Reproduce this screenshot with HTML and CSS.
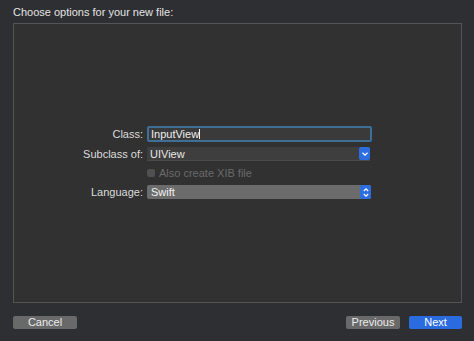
FILE: index.html
```html
<!DOCTYPE html>
<html lang="en">
<head>
    <meta charset="UTF-8">
    <title>Choose options</title>
    <link rel="stylesheet" href="styles.css">
</head>
<body>
    <div class="sheet">
        <div class="title">Choose options for your new file:</div>

        <div class="panel">
            <div class="form">
                <label class="label">Class:</label>
                <div class="text-field">InputView<span class="caret"></span></div>

                <label class="label">Subclass of:</label>
                <div class="combo">
                    <span>UIView</span>
                    <span class="combo-btn">
                        <svg width="8" height="6" viewBox="0 0 8 6"><path d="M1.5 1.8 L4 4.2 L6.5 1.8" fill="none" stroke="#fff" stroke-width="1.2"/></svg>
                    </span>
                </div>

                <span></span>
                <div class="check-row">
                    <span class="checkbox"></span>
                    <span>Also create XIB file</span>
                </div>

                <label class="label">Language:</label>
                <div class="popup">
                    <span>Swift</span>
                    <span class="popup-btn">
                        <svg width="8" height="11" viewBox="0 0 8 11"><path d="M1.8 4 L4 1.8 L6.2 4 M1.8 7 L4 9.2 L6.2 7" fill="none" stroke="#fff" stroke-width="1.2"/></svg>
                    </span>
                </div>
            </div>
        </div>

        <div class="footer">
            <button class="btn">Cancel</button>
            <div class="spacer"></div>
            <button class="btn">Previous</button>
            <button class="btn primary">Next</button>
        </div>
    </div>
</body>
</html>
```

FILE: styles.css
```css
body {
    margin: 0;
    background: #2e2f32;
    font-family: "Liberation Sans", Arial, sans-serif;
    font-size: 11px;
    color: #dedede;
}
.sheet {
    width: 474px;
    height: 341px;
    padding: 0 12px 0 13px;
    box-sizing: border-box;
}
.title {
    height: 23px;
    line-height: 25px;
    color: #e4e4e4;
}
.panel {
    height: 280px;
    box-sizing: border-box;
    border: 1px solid #545454;
    background: #313131;
    display: flex;
    align-items: center;
}
.form {
    display: grid;
    grid-template-columns: 129px 225px;
    column-gap: 4px;
    row-gap: 5px;
    align-items: center;
    margin-top: -1px;
}
.label {
    text-align: right;
    color: #dcdcdc;
}
.text-field {
    height: 16px;
    box-sizing: border-box;
    border: 2px solid #3d6f97;
    border-radius: 2px;
    background: #3a3a3a;
    line-height: 12px;
    padding-left: 2px;
    color: #f0f0f0;
}
.caret {
    display: inline-block;
    width: 1px;
    height: 10px;
    background: #f0f0f0;
    vertical-align: -1px;
}
.combo {
    height: 14px;
    width: 223px;
    display: flex;
    align-items: center;
    justify-content: space-between;
    background: #3e3e3e;
    border-bottom: 1px solid #4a4a4a;
    padding-left: 3px;
    box-sizing: border-box;
    color: #e8e8e8;
}
.combo-btn, .popup-btn {
    width: 11px;
    height: 13px;
    background: #2c6de0;
    border-radius: 2px;
    display: flex;
    align-items: center;
    justify-content: center;
}
.check-row {
    display: flex;
    align-items: center;
    gap: 4px;
    height: 14px;
    color: #6a6a6a;
    margin: 0;
}
.checkbox {
    width: 8px;
    height: 8px;
    border-radius: 2px;
    background: #505050;
}
.popup {
    height: 14px;
    width: 224px;
    display: flex;
    align-items: center;
    justify-content: space-between;
    background: #6c6c6c;
    border-radius: 2px;
    padding-left: 4px;
    box-sizing: border-box;
    color: #f2f2f2;
}
.popup-btn {
    height: 14px;
}
.footer {
    display: flex;
    align-items: center;
    gap: 9px;
    margin-top: 13px;
}
.spacer {
    flex: 1;
}
.btn {
    height: 13px;
    padding: 0;
    border: none;
    border-radius: 2px;
    background: #696969;
    color: #ececec;
    font-family: "Liberation Sans", Arial, sans-serif;
    font-size: 11px;
    line-height: 13px;
    width: 64px;
}
.btn:nth-of-type(2) {
    width: 54px;
}
.btn.primary {
    width: 53px;
    background: #2a6ce0;
    color: #fff;
}
```
